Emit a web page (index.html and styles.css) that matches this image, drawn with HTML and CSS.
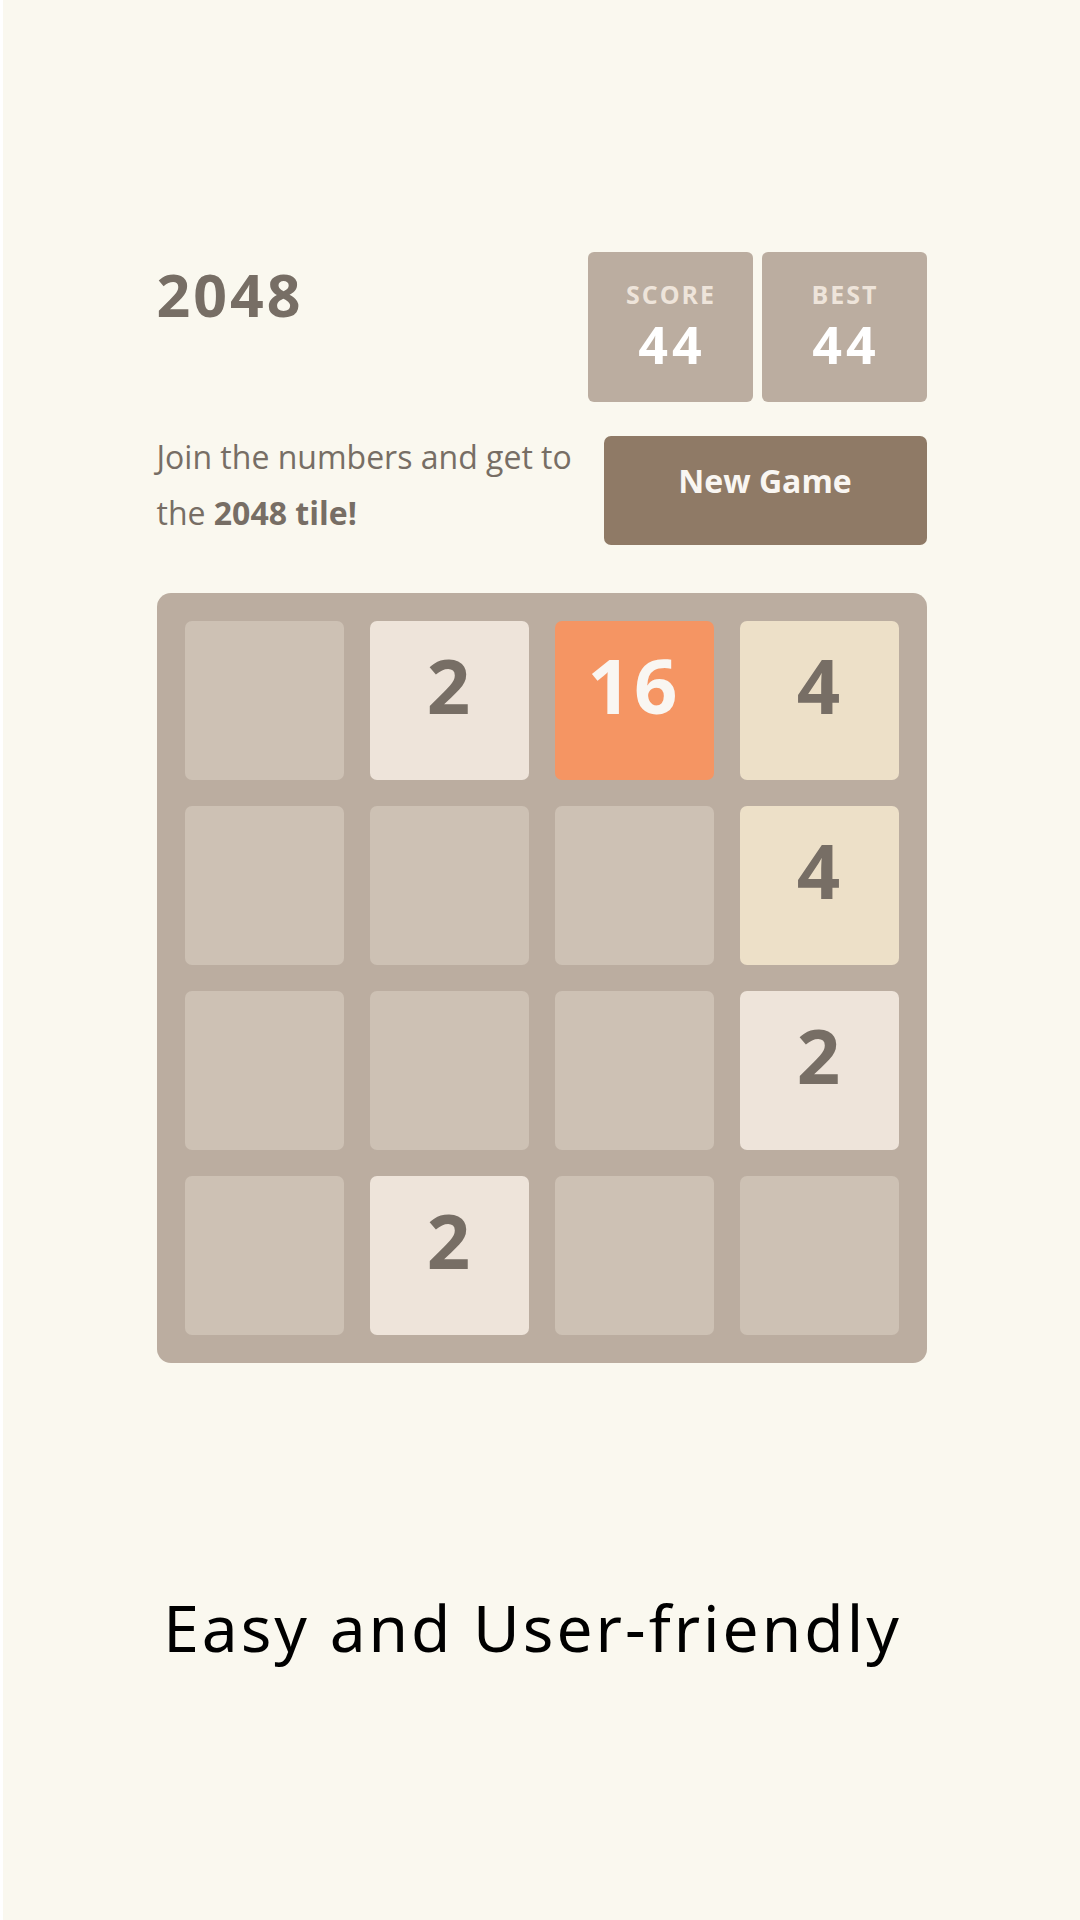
FILE: index.html
```html
<!DOCTYPE html>
<html lang="en">
<head>
<meta charset="utf-8">
<title>2048</title>
<link rel="stylesheet" href="styles.css">
</head>
<body>
<div class="page">
  <div class="container">
    <div class="heading">
      <h1 class="title">2048</h1>
      <div class="scores">
        <div class="score-box">
          <div class="score-label">SCORE</div>
          <div class="score-value">44</div>
        </div>
        <div class="score-box">
          <div class="score-label">BEST</div>
          <div class="score-value">44</div>
        </div>
      </div>
    </div>
    <div class="above-game">
      <p class="intro">Join the numbers and get to the <strong>2048 tile!</strong></p>
      <button class="new-game">New Game</button>
    </div>
    <div class="grid">
      <div class="cell"></div>
      <div class="cell tile-2">2</div>
      <div class="cell tile-16">16</div>
      <div class="cell tile-4">4</div>

      <div class="cell"></div>
      <div class="cell"></div>
      <div class="cell"></div>
      <div class="cell tile-4">4</div>

      <div class="cell"></div>
      <div class="cell"></div>
      <div class="cell"></div>
      <div class="cell tile-2">2</div>

      <div class="cell"></div>
      <div class="cell tile-2">2</div>
      <div class="cell"></div>
      <div class="cell"></div>
    </div>
  </div>
  <div class="tagline">Easy and User-friendly</div>
</div>
</body>
</html>
```
FILE: styles.css
```css
* { box-sizing: border-box; }

html, body {
  margin: 0;
  padding: 0;
  background: #ffffff;
}

.page {
  margin-left: 3px;
  min-height: 1920px;
  background: #faf8ef;
  padding-top: 252px;
  display: flex;
  flex-direction: column;
  align-items: center;
  font-family: "Open Sans", "Noto Sans", sans-serif;
  color: #776e65;
}

.container {
  width: 770px;
}

.heading {
  display: flex;
  justify-content: space-between;
  align-items: flex-start;
}

.title {
  margin: 0;
  padding-top: 2px;
  font-size: 59px;
  line-height: 80px;
  font-weight: 700;
  letter-spacing: 3px;
  color: #776e65;
}

.scores {
  display: flex;
  gap: 9px;
}

.score-box {
  width: 165px;
  height: 150px;
  background: #bbada0;
  border-radius: 6px;
  padding-top: 27px;
  text-align: center;
}

.score-label {
  font-size: 25px;
  line-height: 30px;
  font-weight: 700;
  letter-spacing: 2px;
  padding-left: 2px;
  color: #eee4da;
}

.score-value {
  margin-top: 5px;
  font-size: 52px;
  line-height: 60px;
  font-weight: 700;
  letter-spacing: 4px;
  padding-left: 4px;
  color: #ffffff;
}

.above-game {
  margin-top: 27px;
  display: flex;
  justify-content: space-between;
  align-items: flex-start;
  gap: 10px;
}

.intro {
  margin: 0;
  flex: 1;
  font-size: 32px;
  line-height: 56px;
  color: #776e65;
}

.intro strong {
  font-weight: 700;
}

.new-game {
  margin-top: 7px;
  width: 323px;
  height: 109px;
  flex: none;
  border: none;
  border-radius: 7px;
  background: #8f7a66;
  color: #f9f6f2;
  font-family: "Open Sans", "Noto Sans", sans-serif;
  font-size: 32px;
  font-weight: 700;
  padding: 0 0 20px 0;
  line-height: 1;
}

.grid {
  margin-top: 48px;
  width: 770px;
  height: 770px;
  background: #bbada0;
  border-radius: 14px;
  padding: 28px;
  display: grid;
  grid-template-columns: repeat(4, 1fr);
  grid-template-rows: repeat(4, 1fr);
  gap: 26px;
}

.cell {
  background: #cdc1b4;
  border-radius: 7px;
  display: flex;
  align-items: center;
  justify-content: center;
  padding-bottom: 32px;
  font-size: 76px;
  line-height: 1;
  font-weight: 700;
  letter-spacing: 1px;
  color: #776e65;
}

.tile-2 { background: #eee4da; }
.tile-4 { background: #ede0c8; }
.tile-16 { background: #f59563; color: #f9f6f2; letter-spacing: 3px; }

.tagline {
  margin-top: 221px;
  font-family: "Noto Sans", "Open Sans", sans-serif;
  font-size: 64px;
  line-height: 87px;
  font-weight: 400;
  letter-spacing: 3px;
  color: #000000;
  text-align: center;
  padding-right: 18px;
}
```
